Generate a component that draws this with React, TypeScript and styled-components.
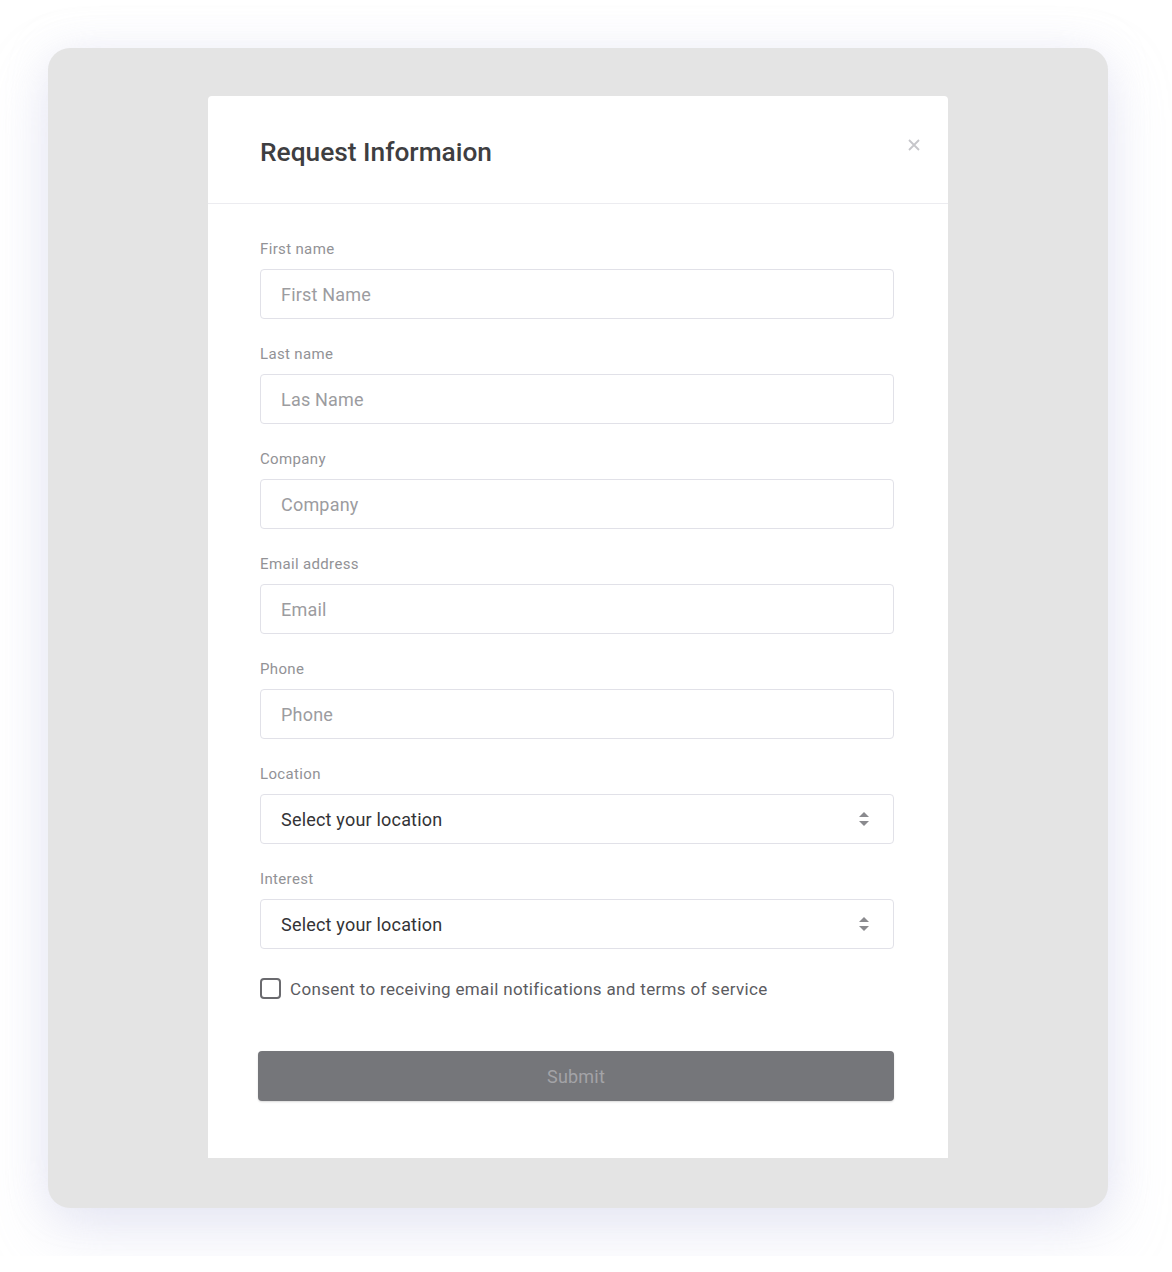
import React from "react";
import styled, { createGlobalStyle } from "styled-components";

const Global = createGlobalStyle`
  html, body { margin: 0; padding: 0; background: #ffffff; }
  body { font-family: Roboto, "Liberation Sans", Arial, sans-serif; }
  * { box-sizing: border-box; }
`;

const Page = styled.div`
  padding: 48px;
  width: 1172px;
`;

const Backdrop = styled.div`
  width: 1060px;
  height: 1160px;
  background: #e4e4e4;
  border-radius: 22px;
  box-shadow: 0 24px 60px rgba(196, 198, 228, 0.35), 0 0 40px rgba(210, 212, 235, 0.25);
  padding-top: 48px;
  display: flex;
  justify-content: center;
  align-items: flex-start;
`;

const Modal = styled.div`
  width: 740px;
  background: #ffffff;
  border-radius: 4px 4px 0 0;
  display: flex;
  flex-direction: column;
`;

const Header = styled.div`
  height: 108px;
  position: relative;
  display: flex;
  align-items: center;
  padding: 0 52px;
  border-bottom: 1px solid #ececf0;
`;

const Title = styled.h2`
  margin: 0;
  margin-top: 4px;
  font-size: 26.3px;
  font-weight: 500;
  color: #3e3e41;
  letter-spacing: 0;
`;

const Close = styled.button`
  position: absolute;
  top: 42px;
  right: 27px;
  width: 14px;
  height: 14px;
  padding: 0;
  border: none;
  background: transparent;
  display: flex;
  align-items: center;
  justify-content: center;
`;

const Body = styled.form`
  padding: 36px 54px 57px 52px;
  display: flex;
  flex-direction: column;
`;

const Field = styled.div`
  display: flex;
  flex-direction: column;
  gap: 11px;
  margin-bottom: 26px;
`;

const Label = styled.label`
  font-size: 15px;
  line-height: 18px;
  color: #929296;
  letter-spacing: 0.35px;
`;

const Input = styled.input`
  height: 50px;
  width: 100%;
  border: 1px solid #e1e1e8;
  border-radius: 4px;
  padding: 0 20px;
  font-family: Roboto, "Liberation Sans", Arial, sans-serif;
  font-size: 18px;
  letter-spacing: 0.2px;
  color: #333;
  outline: none;
  &::placeholder { color: #9c9ca0; }
`;

const SelectBox = styled.div`
  height: 50px;
  width: 100%;
  border: 1px solid #e1e1e8;
  border-radius: 4px;
  padding: 0 23px 0 20px;
  display: flex;
  align-items: center;
  justify-content: space-between;
  font-size: 18px;
  letter-spacing: 0.2px;
  color: #333336;
`;

const CheckRow = styled.label`
  display: flex;
  align-items: center;
  gap: 9px;
  margin-top: 3px;
  font-size: 17px;
  letter-spacing: 0.33px;
  color: #5b5b5f;
`;

const Box = styled.span`
  width: 21px;
  height: 21px;
  border: 2px solid #6a6a6e;
  border-radius: 4px;
  flex-shrink: 0;
`;

const Submit = styled.button`
  margin-top: 52px;
  margin-left: -2px;
  width: 636px;
  height: 50px;
  border: none;
  border-radius: 4px;
  background: #75767a;
  color: #a3a3a7;
  font-family: Roboto, "Liberation Sans", Arial, sans-serif;
  font-size: 18px;
  letter-spacing: 0.2px;
  box-shadow: 0 1px 2px rgba(0,0,0,0.15);
`;

const Arrows = () => (
  <svg width="12" height="18" viewBox="0 0 12 18">
    <path d="M6 2 L11 7 H1 Z" fill="#8a8a8e" />
    <path d="M6 16 L11 11 H1 Z" fill="#8a8a8e" />
  </svg>
);

const fields = [
  { label: "First name", ph: "First Name" },
  { label: "Last name", ph: "Las Name" },
  { label: "Company", ph: "Company" },
  { label: "Email address", ph: "Email" },
  { label: "Phone", ph: "Phone" },
];

export default function App() {
  return (
    <>
      <Global />
      <Page>
        <Backdrop>
          <Modal>
            <Header>
              <Title>Request Informaion</Title>
              <Close aria-label="close">
                <svg width="12" height="12" viewBox="0 0 12 12">
                  <path d="M1 1 L11 11 M11 1 L1 11" stroke="#c6c6ca" strokeWidth="1.8" />
                </svg>
              </Close>
            </Header>
            <Body onSubmit={(e) => e.preventDefault()}>
              {fields.map((f) => (
                <Field key={f.label}>
                  <Label>{f.label}</Label>
                  <Input placeholder={f.ph} />
                </Field>
              ))}
              <Field>
                <Label>Location</Label>
                <SelectBox>
                  <span>Select your location</span>
                  <Arrows />
                </SelectBox>
              </Field>
              <Field>
                <Label>Interest</Label>
                <SelectBox>
                  <span>Select your location</span>
                  <Arrows />
                </SelectBox>
              </Field>
              <CheckRow>
                <Box />
                Consent to receiving email notifications and terms of service
              </CheckRow>
              <Submit type="submit">Submit</Submit>
            </Body>
          </Modal>
        </Backdrop>
      </Page>
    </>
  );
}
